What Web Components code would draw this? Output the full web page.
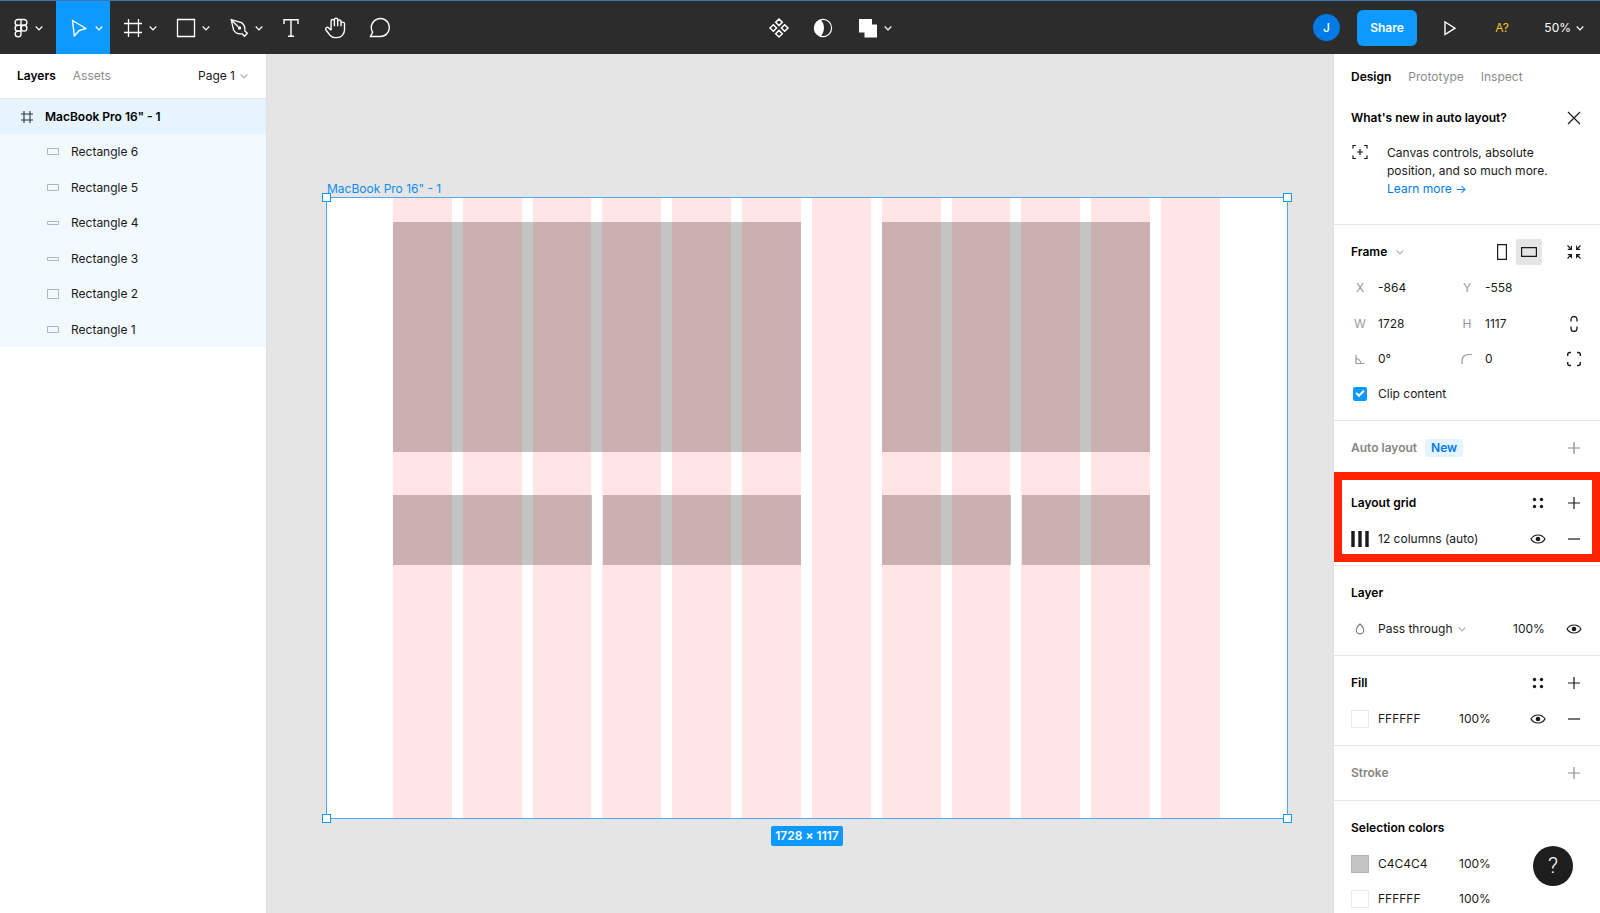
<!DOCTYPE html>
<html lang="en">
<head>
<meta charset="utf-8">
<meta name="viewport" content="width=device-width, initial-scale=1">
<title>MacBook Pro layout grid</title>
<style>
  html, body { margin: 0; height: 100%; }
  body { font: 12px/18px Inter, "Liberation Sans", sans-serif; color: #1a1a1a; background: #e5e5e5; }
</style>
</head>
<body>
<design-app></design-app>

<script>
const RESET = `
  *, *::before, *::after { box-sizing: border-box; }
  button, input, select { font: inherit; color: inherit; background: none; border: 0; padding: 0; margin: 0; border-radius: 0; }
  button { cursor: pointer; }
  h2 { margin: 0; font: inherit; font-weight: 600; color: #000; }
`;

function define(name, css, html, setup) {
  const template = document.createElement('template');
  template.innerHTML = `<style>${RESET}${css}</style>${html}`;
  customElements.define(name, class extends HTMLElement {
    connectedCallback() {
      if (this.shadowRoot) return;
      this.attachShadow({ mode: 'open' }).append(template.content.cloneNode(true));
      if (setup) setup(this, this.shadowRoot);
    }
  });
}

/* name: [width, height, drawing]; everything is stroked with the current colour */
const ICONS = {
  figma: [22, 22, '<g stroke-width="1.4"><path d="M11 2.5H8a2.9 2.9 0 0 0 0 5.8h3zM11 2.5h3a2.9 2.9 0 0 1 0 5.8h-3zM11 8.3H8a2.9 2.9 0 0 0 0 5.8h3z"/><circle cx="14" cy="11.2" r="2.9"/><path d="M8 14.1h3V17a2.9 2.9 0 1 1-3-2.9z"/></g>'],
  chev: [10, 10, '<path d="M1.7 3.5 5 6.8l3.3-3.3" stroke-width="1.2"/>'],
  move: [22, 22, '<path d="M4.5 3.5 18 11.500l-6.800 2L6.300 19z" stroke-width="1.4" stroke-linejoin="round"/>'],
  frame: [22, 22, '<path d="M6.5 2v18M16.500 2v18M2 6.500h18M2 15.500h18" stroke-width="1.3"/>'],
  rect: [22, 22, '<path d="M2.500 2.500h17v17h-17z" stroke-width="1.3"/>'],
  pen: [22, 22, '<path d="M3.200 2.700 13.500 5.600C16.300 7.600 17.300 10.500 16.800 14l2.600 2.300-2.900 3-2.500-2.500C10.500 17.300 7.300 16 5.600 13zM3.200 2.700l7 7" stroke-width="1.3"/><circle cx="11.500" cy="11" r="1.700" fill="currentColor" stroke="none"/>'],
  text: [22, 22, '<path d="M4 7V2.700h14V7M11 2.700v16.600M8 19.300h6" stroke-width="1.400"/>'],
  hand: [24, 24, '<g transform="translate(1 .5) scale(.92)" stroke-width="1.500"><path d="M18.500 10.500V5.500a1.800 1.800 0 0 0-3.600 0M14.900 10.500V3.500a1.800 1.800 0 0 0-3.600 0v7M11.300 10.500V5a1.800 1.800 0 0 0-3.600 0v10M18.500 8a1.900 1.900 0 1 1 3.800 0v6.500a8.300 8.300 0 0 1-8.300 8.500h-1.500c-2.800 0-4.500-.860-5.990-2.640L2.300 15a1.900 1.900 0 0 1 2.830-2.600L7.700 15"/></g>'],
  comment: [22, 22, '<path d="M12 19.500H2.500l2.100-4.300A9 9 0 1 1 12 19.500z" stroke-width="1.400"/>'],
  component: [22, 22, '<g stroke-width="1.500"><path d="m11 2 3.300 3.300L11 8.600 7.700 5.300zM11 13.400l3.300 3.300L11 20l-3.300-3.300zM5.300 7.700 8.600 11l-3.300 3.300L2 11zM16.700 7.700 20 11l-3.300 3.300-3.300-3.300z"/></g>'],
  mask: [22, 22, '<circle cx="11" cy="11" r="8.600" stroke-width="1.200"/><path d="M9 2.700a8.500 8.500 0 0 0 0 16.600A13 13 0 0 0 9 2.700z" fill="currentColor" stroke="none"/>'],
  union: [22, 22, '<path d="M2 2h13v5.500h5V20.500H7.500V15.500H2z" fill="currentColor" stroke="none"/>'],
  play: [22, 22, '<path d="M6 5v12.500l10-6.300z" stroke-width="1.400" stroke-linejoin="miter"/>'],
  frameSmall: [14, 14, '<path d="M4 1v12M10 1v12M1 4h12M1 10h12" stroke-width="1.100"/>'],
  boxMedium: [12, 12, '<path d="M.5 2.500h11v6H.5z"/>'],
  boxLow: [12, 12, '<path d="M.5 4.500h11v3H.5z"/>'],
  boxTall: [12, 12, '<path d="M.5 1.500h11v9H.5z"/>'],
  close: [14, 14, '<path d="m1 1 12 12M13 1 1 13" stroke-width="1.200"/>'],
  focus: [16, 16, '<path d="M1 4.500V1.500h3M12 1.500h3v3M15 11.500v3h-3M4 14.500H1v-3M8 4.800v6.400M4.800 8h6.400" stroke-width="1.200"/>'],
  portrait: [10, 16, '<path d="M.6.600h8.800v14.800H.6z" stroke-width="1.200"/>'],
  landscape: [16, 10, '<path d="M.6.600h14.800v8.800H.6z" stroke-width="1.200"/>'],
  shrink: [16, 16, '<path d="m1.500 1.500 3.500 3.500M1.800 5.400h3.600V1.800M14.500 1.500 11 5M14.200 5.400h-3.600V1.800M1.500 14.500 5 11M1.800 10.600h3.600v3.600M14.500 14.500 11 11M14.200 10.600h-3.600v3.600" stroke-width="1.100"/>'],
  link: [16, 16, '<path d="M5 5.500V3.500a3 3 0 0 1 6 0v2M5 10.500v2a3 3 0 0 0 6 0v-2" stroke-width="1.300"/>'],
  corners: [16, 16, '<path d="M1.700 5V3.500a2 2 0 0 1 2-2H5M11 1.500h1.300a2 2 0 0 1 2 2V5M14.300 11v1.500a2 2 0 0 1-2 2H11M5 14.500H3.700a2 2 0 0 1-2-2V11" stroke-width="1.400"/>'],
  angle: [12, 12, '<path d="M2 2v8.500h8.500M2 5.700a5 5 0 0 1 4.800 4.800" stroke-width="1.200"/>'],
  radius: [12, 12, '<path d="M1 11V7.500a6 6 0 0 1 6-6h4" stroke-width="1.200"/>'],
  plus: [14, 14, '<path d="M7 1v12M1 7h12" stroke-width="1.200"/>'],
  minus: [14, 14, '<path d="M1 7h12" stroke-width="1.200"/>'],
  dots: [12, 12, '<g fill="currentColor" stroke="none"><circle cx="2.500" cy="2.500" r="1.700"/><circle cx="9.500" cy="2.500" r="1.700"/><circle cx="2.500" cy="9.500" r="1.700"/><circle cx="9.500" cy="9.500" r="1.700"/></g>'],
  eye: [16, 12, '<path d="M1 6C2.600 3.300 5 2 8 2s5.400 1.300 7 4c-1.600 2.700-4 4-7 4S2.600 8.700 1 6z" stroke-width="1.200"/><circle cx="8" cy="6" r="2.300" fill="currentColor" stroke="none"/>'],
  columns: [18, 18, '<path d="M2 1v16M9 1v16M16 1v16" stroke-width="3.400"/>'],
  drop: [12, 12, '<path d="M6 1c2.500 2.500 3.700 4.200 3.700 6.200a3.700 3.700 0 0 1-7.400 0C2.300 5.200 3.500 3.500 6 1z" stroke-width="1.100"/>'],
};

customElements.define('ui-icon', class extends HTMLElement {
  connectedCallback() {
    if (this.shadowRoot) return;
    const [w, h, body] = ICONS[this.getAttribute('name')];
    this.attachShadow({ mode: 'open' }).innerHTML = `
      <style>:host { display: inline-flex; flex: none; } svg { display: block; }</style>
      <svg width="${w}" height="${h}" viewBox="0 0 ${w} ${h}" fill="none" stroke="currentColor" aria-hidden="true">${body}</svg>`;
  }
});

define('tool-button', `
  :host { display: flex; flex: none; width: 44px; }
  :host([menu]) { width: 53px; }
  :host([active]) { width: 54px; background: #0d99ff; }
  :host([home]) { width: 56px; }
  button { flex: 1; display: flex; align-items: center; justify-content: center; gap: 4px; color: #fff; }
  :host([menu]) button { justify-content: flex-start; padding-left: 12px; }
  :host([home]) button { padding-left: 10px; gap: 2px; }
  .chev { display: none; }
  :host([menu]) .chev { display: inline-flex; }
`, `<button type="button"><slot></slot><ui-icon class="chev" name="chev"></ui-icon></button>`,
(host, root) => root.querySelector('button').setAttribute('aria-label', host.getAttribute('label')));

define('top-bar', `
  :host { display: flex; height: 54px; background: #2c2c2c; border-top: 1px solid #3f74b3; color: #fff; }
  .group { display: flex; }
  .center { margin: 0 auto; }
  .right { align-items: center; padding-left: 60px; }
  .avatar { width: 27px; height: 27px; border-radius: 50%; background: #007be5; display: grid; place-items: center; margin-right: 17px; font-weight: 500; }
  .share { width: 60px; height: 36px; border-radius: 6px; background: #0d99ff; font-weight: 600; }
  .play { width: 66px; display: flex; justify-content: center; }
  .missing { width: 38px; color: #f2c32c; }
  .zoom { width: 79px; display: flex; align-items: center; justify-content: flex-end; gap: 4px; padding-right: 15px; }
`, `
  <nav class="group" aria-label="Tools">
    <tool-button menu home label="Main menu"><ui-icon name="figma"></ui-icon></tool-button>
    <tool-button menu active label="Move"><ui-icon name="move"></ui-icon></tool-button>
    <tool-button menu label="Frame"><ui-icon name="frame"></ui-icon></tool-button>
    <tool-button menu label="Shape"><ui-icon name="rect"></ui-icon></tool-button>
    <tool-button menu label="Pen"><ui-icon name="pen"></ui-icon></tool-button>
    <tool-button label="Text"><ui-icon name="text"></ui-icon></tool-button>
    <tool-button label="Hand"><ui-icon name="hand"></ui-icon></tool-button>
    <tool-button label="Comment"><ui-icon name="comment"></ui-icon></tool-button>
  </nav>
  <div class="group center">
    <tool-button label="Create component"><ui-icon name="component"></ui-icon></tool-button>
    <tool-button label="Mask"><ui-icon name="mask"></ui-icon></tool-button>
    <tool-button menu label="Union"><ui-icon name="union"></ui-icon></tool-button>
  </div>
  <div class="group right">
    <span class="avatar">J</span>
    <button type="button" class="share">Share</button>
    <button type="button" class="play" aria-label="Present"><ui-icon name="play"></ui-icon></button>
    <button type="button" class="missing">A?</button>
    <button type="button" class="zoom">50%<ui-icon name="chev"></ui-icon></button>
  </div>`);

define('layer-row', `
  :host { display: flex; align-items: center; height: 35px; background: #f2f9ff; }
  :host(:nth-child(even)) { height: 36px; }
  :host([frame]) { background: #e5f4ff; font-weight: 600; color: #000; }
  button { flex: 1; display: flex; align-items: center; gap: 12px; padding-left: 47px; height: 100%; text-align: left; }
  :host([frame]) button { padding-left: 20px; gap: 11px; }
  ui-icon { color: #b0b5b9; }
  :host([frame]) ui-icon { color: #333; }
`, `<button type="button"><slot></slot></button>`,
(host, root) => {
  const icon = document.createElement('ui-icon');
  icon.setAttribute('name', host.getAttribute('icon'));
  root.querySelector('button').prepend(icon);
});

define('layers-panel', `
  :host { display: block; background: #fff; border-right: 1px solid #e0e0e0; overflow: hidden; }
  header { display: flex; align-items: center; height: 45px; padding: 0 17px; border-bottom: 1px solid #e5e5e5; }
  .on { font-weight: 600; color: #000; margin-right: 17px; }
  .off { color: #8c8c8c; }
  .page { margin-left: auto; display: flex; align-items: center; gap: 4px; }
  .page ui-icon { color: #b3b3b3; }
`, `
  <header>
    <button type="button" class="on">Layers</button>
    <button type="button" class="off">Assets</button>
    <button type="button" class="page">Page 1<ui-icon name="chev"></ui-icon></button>
  </header>
  <div>
    <layer-row frame icon="frameSmall">MacBook Pro 16" - 1</layer-row>
    <layer-row icon="boxMedium">Rectangle 6</layer-row>
    <layer-row icon="boxMedium">Rectangle 5</layer-row>
    <layer-row icon="boxLow">Rectangle 4</layer-row>
    <layer-row icon="boxLow">Rectangle 3</layer-row>
    <layer-row icon="boxTall">Rectangle 2</layer-row>
    <layer-row icon="boxMedium">Rectangle 1</layer-row>
  </div>`);

define('design-canvas', `
  :host { display: flex; flex-direction: column; background: #e5e5e5; padding: 127px 45px 0 59px; overflow: hidden; }
  .name { color: #0d8cf2; line-height: 16px; padding-left: 1px; }
  .artboard { position: relative; display: grid; aspect-ratio: 1728 / 1117; background: #fff; border: 1px solid #4fa8f5; }
  .shapes, .columns { grid-area: 1 / 1; display: grid; grid-template-columns: repeat(12, 1fr); column-gap: 11px; padding: 0 67px 0 66px; }
  .shapes { grid-template-rows: 230px 70px; row-gap: 43px; padding-top: 24px; }
  .shapes i { background: #c4c4c4; }
  .columns i { background: rgba(255, 0, 0, .1); }
  .a { grid-area: 1 / 1 / 2 / 7; }
  .b { grid-area: 1 / 8 / 2 / 12; }
  .c { grid-area: 2 / 1 / 3 / 4; }
  .d { grid-area: 2 / 4 / 3 / 7; }
  .e { grid-area: 2 / 8 / 3 / 10; }
  .f { grid-area: 2 / 10 / 3 / 12; }
  .handle { position: absolute; width: 9px; height: 9px; background: #fff; border: 1px solid #0d99ff; }
  .t { top: -5px; } .u { bottom: -5px; } .l { left: -5px; } .r { right: -5px; }
  .size { align-self: center; margin-top: 7px; padding: 0 4px; line-height: 20px; border-radius: 2px; background: #0d99ff; color: #fff; font-weight: 600; }
`, `
  <span class="name">MacBook Pro 16" - 1</span>
  <div class="artboard">
    <div class="shapes"><i class="a"></i><i class="b"></i><i class="c"></i><i class="d"></i><i class="e"></i><i class="f"></i></div>
    <div class="columns">${'<i></i>'.repeat(12)}</div>
    <span class="handle t l"></span><span class="handle t r"></span>
    <span class="handle u l"></span><span class="handle u r"></span>
  </div>
  <span class="size">1728 × 1117</span>`);

define('panel-section', `
  :host { display: block; position: relative; padding: 9px 8px 9px 17px; border-bottom: 1px solid #e5e5e5; }
  header { display: flex; align-items: center; height: 36px; }
  h2 { margin-right: auto; display: flex; align-items: center; gap: 8px; }
  :host([muted]) h2 { color: #858585; }
  :host([marked])::after { content: ""; position: absolute; inset: -4px 0 3px; border: 8px solid #ff2200; pointer-events: none; }
`, `<header><h2><slot name="title"></slot></h2><slot name="actions"></slot></header><slot></slot>`);

define('icon-button', `
  :host { display: flex; flex: none; width: 36px; height: 26px; }
  :host([small]) { width: 26px; }
  :host([pressed]) { background: #e5e5e5; border-radius: 2px; }
  :host([dim]) { color: #8c8c8c; }
  button { flex: 1; display: flex; align-items: center; justify-content: center; }
`, `<button type="button"><slot></slot></button>`,
(host, root) => root.querySelector('button').setAttribute('aria-label', host.getAttribute('label')));

define('value-field', `
  :host { display: flex; min-width: 0; }
  label { display: flex; align-items: center; gap: 9px; min-width: 0; }
  span { width: 18px; display: flex; justify-content: center; color: #999; }
  input { width: 56px; }
`, `<label><span><slot></slot></span><input type="text"></label>`,
(host, root) => {
  const input = root.querySelector('input');
  input.value = host.getAttribute('value');
  input.setAttribute('aria-label', host.getAttribute('label'));
});

define('paint-row', `
  :host { display: grid; grid-template-columns: 18px 72px minmax(0, 1fr) auto; column-gap: 9px; align-items: center; height: 35px; }
  .swatch { width: 18px; height: 18px; border: 1px solid rgba(0, 0, 0, .08); }
  input { width: 100%; min-width: 0; }
  .end { display: flex; }
`, `<button type="button" class="swatch" aria-label="Colour"></button>
  <input type="text" class="hex" aria-label="Hex colour"><input type="text" value="100%" aria-label="Opacity">
  <div class="end"><slot></slot></div>`,
(host, root) => {
  const hex = host.getAttribute('hex');
  root.querySelector('.hex').value = hex;
  root.querySelector('.swatch').style.background = '#' + hex;
});

define('design-panel', `
  :host { display: block; background: #fff; border-left: 1px solid #e0e0e0; overflow-y: auto; scrollbar-width: none; }
  .tabs { display: flex; align-items: center; gap: 17px; height: 45px; padding-left: 17px; color: #8c8c8c; }
  .tabs .on { font-weight: 600; color: #000; }
  .news { border-bottom: 1px solid #e5e5e5; padding: 0 8px 26px 17px; }
  .news header { display: flex; align-items: center; justify-content: space-between; height: 37px; }
  .news div { display: flex; gap: 18px; margin-top: 8px; }
  .news p { margin: 0; width: 172px; }
  .news div ui-icon { margin: 0 1px; }
  a { color: #007be5; text-decoration: none; }
  .row { display: flex; align-items: center; height: 35px; }
  .fields { display: grid; grid-template: 36px 35px 35px 35px / 107px minmax(0, 1fr) 36px; align-items: center; }
  .fields .clip { grid-column: 1 / -1; display: flex; align-items: center; gap: 11px; padding-left: 2px; }
  .clip input { appearance: none; width: 14px; height: 14px; border-radius: 2px; background: #0d99ff; display: grid; place-items: center; }
  .clip input:checked::before { content: ""; width: 8px; height: 5px; border: solid #fff; border-width: 0 0 2px 2px; transform: translateY(-1px) rotate(-45deg); }
  .chev { color: #b3b3b3; }
  .orient { margin-right: 14px; display: flex; gap: 1px; }
  .new { background: #e5f4ff; color: #007be5; padding: 0 6px; border-radius: 2px; }
  .grid { flex: 1; display: flex; align-items: center; gap: 9px; text-align: left; }
  .blend { display: flex; align-items: center; gap: 9px; margin-right: auto; }
  .blend > ui-icon { width: 18px; justify-content: center; color: #808080; }
  .blend label { display: flex; align-items: center; gap: 4px; }
  .blend select { appearance: none; }
  .opacity { width: 43px; }
`, `
  <nav class="tabs" aria-label="Panel">
    <button type="button" class="on">Design</button><button type="button">Prototype</button><button type="button">Inspect</button>
  </nav>
  <section class="news">
    <header><h2>What's new in auto layout?</h2><icon-button label="Close"><ui-icon name="close"></ui-icon></icon-button></header>
    <div><ui-icon name="focus"></ui-icon><p>Canvas controls, absolute position, and so much more. <a href="#learn">Learn more →</a></p></div>
  </section>
  <panel-section>
    <span slot="title">Frame</span><ui-icon slot="title" class="chev" name="chev"></ui-icon>
    <span slot="actions" class="orient">
      <icon-button small label="Portrait"><ui-icon name="portrait"></ui-icon></icon-button>
      <icon-button small pressed label="Landscape"><ui-icon name="landscape"></ui-icon></icon-button>
    </span>
    <icon-button slot="actions" label="Resize to fit"><ui-icon name="shrink"></ui-icon></icon-button>
    <div class="fields">
      <value-field label="X" value="-864">X</value-field><value-field label="Y" value="-558">Y</value-field><span></span>
      <value-field label="Width" value="1728">W</value-field><value-field label="Height" value="1117">H</value-field>
      <icon-button label="Constrain proportions"><ui-icon name="link"></ui-icon></icon-button>
      <value-field label="Rotation" value="0°"><ui-icon name="angle"></ui-icon></value-field>
      <value-field label="Corner radius" value="0"><ui-icon name="radius"></ui-icon></value-field>
      <icon-button label="Independent corners"><ui-icon name="corners"></ui-icon></icon-button>
      <label class="clip"><input type="checkbox" checked>Clip content</label>
    </div>
  </panel-section>
  <panel-section muted>
    <span slot="title">Auto layout</span><span slot="title" class="new">New</span>
    <icon-button slot="actions" dim label="Add auto layout"><ui-icon name="plus"></ui-icon></icon-button>
  </panel-section>
  <panel-section marked>
    <span slot="title">Layout grid</span>
    <icon-button slot="actions" label="Grid styles"><ui-icon name="dots"></ui-icon></icon-button>
    <icon-button slot="actions" label="Add grid"><ui-icon name="plus"></ui-icon></icon-button>
    <div class="row">
      <button type="button" class="grid"><ui-icon name="columns"></ui-icon>12 columns (auto)</button>
      <icon-button label="Toggle grid"><ui-icon name="eye"></ui-icon></icon-button>
      <icon-button label="Remove grid"><ui-icon name="minus"></ui-icon></icon-button>
    </div>
  </panel-section>
  <panel-section>
    <span slot="title">Layer</span>
    <div class="row">
      <div class="blend"><ui-icon name="drop"></ui-icon>
        <label><select aria-label="Blend mode"><option>Pass through</option></select><ui-icon class="chev" name="chev"></ui-icon></label>
      </div>
      <input class="opacity" type="text" value="100%" aria-label="Layer opacity">
      <icon-button label="Toggle layer"><ui-icon name="eye"></ui-icon></icon-button>
    </div>
  </panel-section>
  <panel-section>
    <span slot="title">Fill</span>
    <icon-button slot="actions" label="Fill styles"><ui-icon name="dots"></ui-icon></icon-button>
    <icon-button slot="actions" label="Add fill"><ui-icon name="plus"></ui-icon></icon-button>
    <paint-row hex="FFFFFF">
      <icon-button label="Toggle fill"><ui-icon name="eye"></ui-icon></icon-button>
      <icon-button label="Remove fill"><ui-icon name="minus"></ui-icon></icon-button>
    </paint-row>
  </panel-section>
  <panel-section muted>
    <span slot="title">Stroke</span>
    <icon-button slot="actions" dim label="Add stroke"><ui-icon name="plus"></ui-icon></icon-button>
  </panel-section>
  <panel-section>
    <span slot="title">Selection colors</span>
    <paint-row hex="C4C4C4"></paint-row>
    <paint-row hex="FFFFFF"></paint-row>
  </panel-section>`);

define('design-app', `
  :host { display: grid; grid-template: auto minmax(0, 1fr) / 267px minmax(0, 1fr) 267px; height: 100vh; }
  top-bar { grid-column: 1 / -1; }
  .help { position: fixed; right: 27px; bottom: 27px; width: 40px; height: 40px; border-radius: 50%; background: #1e1e1e; color: #fff; font: 300 22px/40px Roboto, "Open Sans", sans-serif; }
`, `
  <top-bar></top-bar>
  <layers-panel></layers-panel>
  <design-canvas></design-canvas>
  <design-panel></design-panel>
  <button type="button" class="help">?</button>`);
</script>
</body>
</html>
